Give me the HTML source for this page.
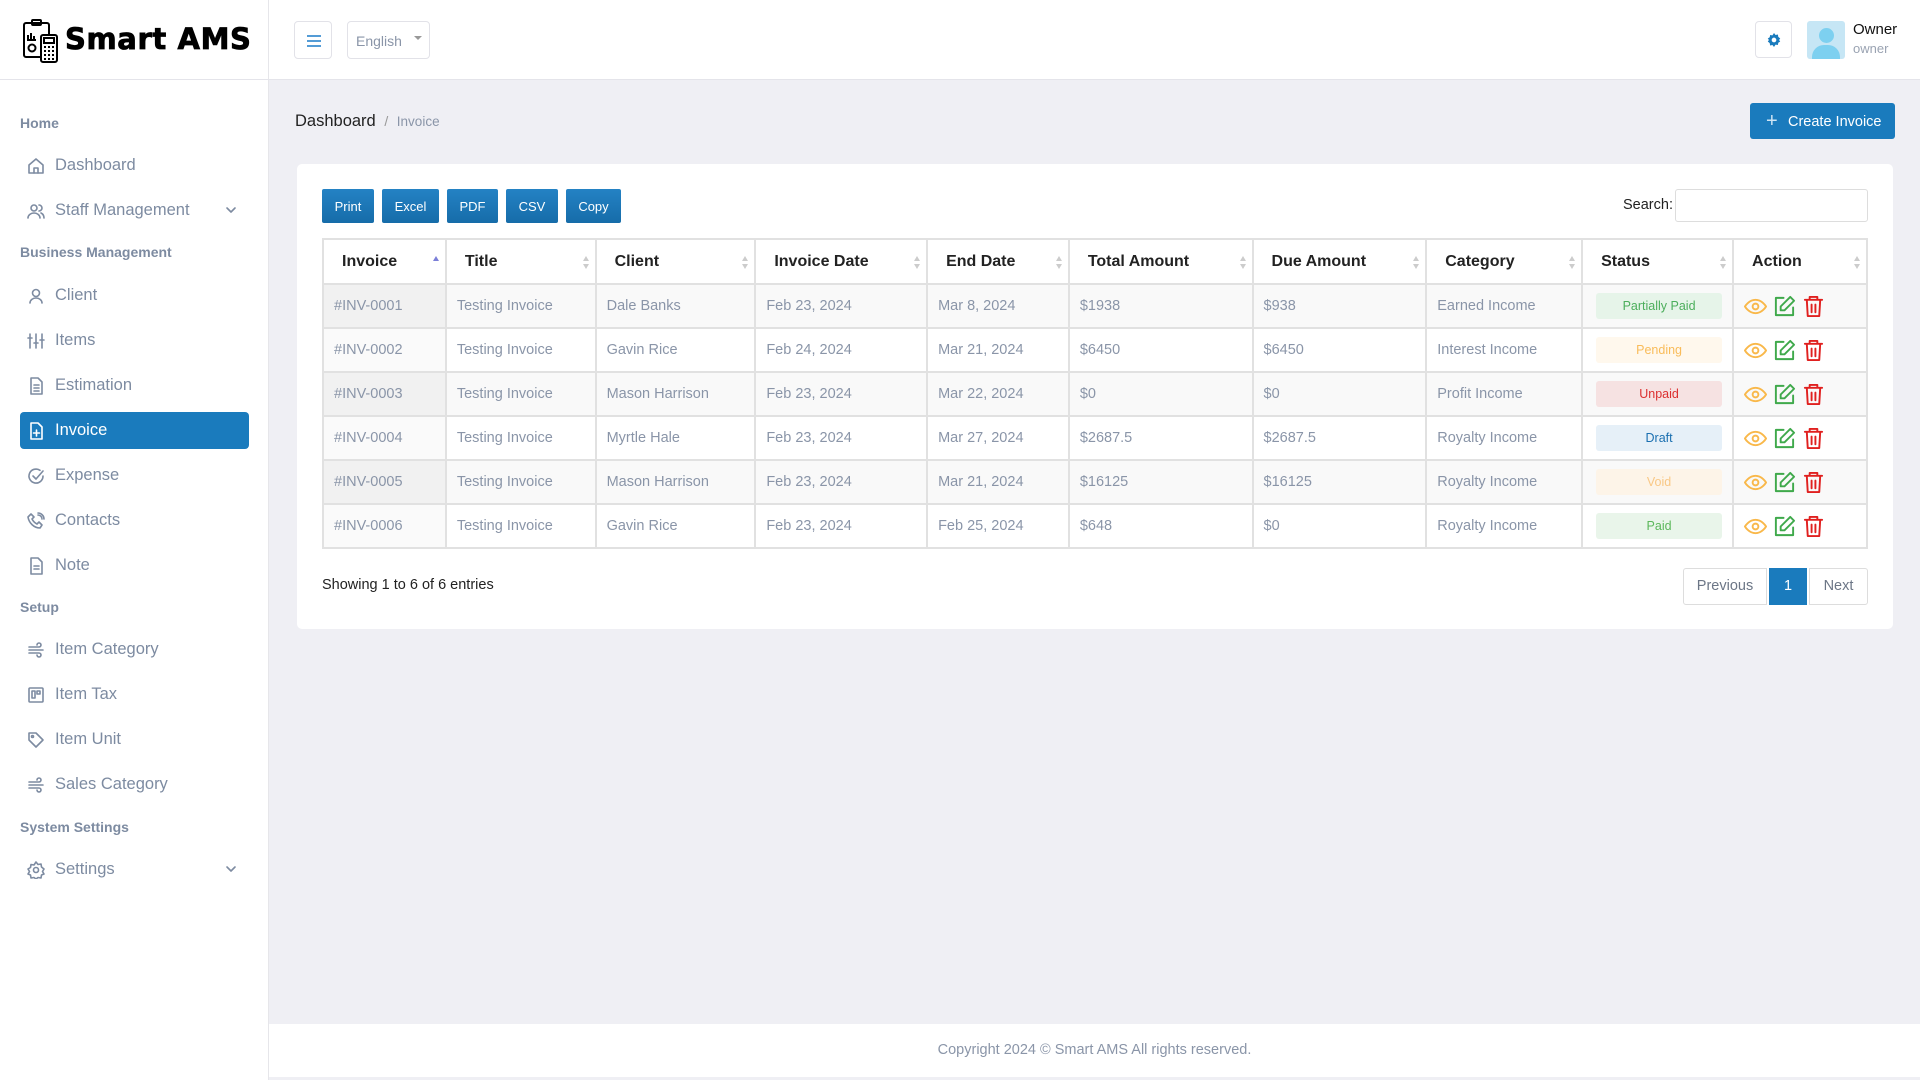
<!DOCTYPE html>
<html><head><meta charset="utf-8"><style>
*{box-sizing:border-box;margin:0;padding:0}
body{width:1920px;height:1080px;position:relative;background:#efeff4;font-family:"Liberation Sans",sans-serif;overflow:hidden}
.a{position:absolute}
#side{left:0;top:0;width:269px;height:1080px;background:#fff;border-right:1px solid #e6e6ea}
#top{left:269px;top:0;width:1651px;height:80px;background:#fff;border-bottom:1px solid #e4e4ea}
.sec{position:absolute;left:20px;font-size:14px;font-weight:bold;color:#7d8ba1;transform:translateY(-50%)}
.it{position:absolute;left:20px;width:229px;height:37px;margin-top:-18px;font-size:16.5px;color:#7d8ba1;display:flex;align-items:center;padding-left:35px;border-radius:4px}
.it svg{position:absolute;left:7px;top:10px;width:18px;height:18px;fill:none;stroke:#7d8ba1;stroke-width:1.6;stroke-linecap:round;stroke-linejoin:round}
.it .chev{left:auto;right:12px;top:12px;width:12px;height:12px}
.it.on{background:#1a7bbd;color:#fff}
.it.on svg{stroke:#fff}
.btn{position:absolute;top:189px;height:34px;background:#1b76b5;color:#fff;font-size:13px;display:flex;align-items:center;justify-content:center;border-radius:2px;background:linear-gradient(#2482c4,#166ca9)}
table{position:absolute;left:322px;top:238px;width:1546px;border-collapse:collapse;font-size:14.5px}
td,th{border:2px solid #e1e1e1;padding:0 0 0 10px;text-align:left;height:44px;color:#8a95a8}
th{color:#222;font-size:16px;font-weight:bold;padding-left:18px;height:45px;position:relative}
th i{position:absolute;right:6px;top:16px;width:6px;height:13px}
th i:before,th i:after{content:"";position:absolute;left:0;border-left:3.5px solid transparent;border-right:3.5px solid transparent}
th i:before{top:0;border-bottom:5px solid #ccc}
th i:after{bottom:0;border-top:5px solid #ccc}
th i.up:after{display:none}th i.up:before{border-bottom-color:#7b7fd8}
tr.o td{background:#f9f9f9}
tr.o td:first-child{background:#f1f1f1}
tr.e td:first-child{background:#fafafa}
.bd{display:block;width:126px;height:26px;border-radius:3px;font-size:12.5px;text-align:center;line-height:26px;margin-left:3px}
.ic{display:flex;gap:6px;align-items:center}
.ic svg{width:23px;height:23px;fill:none;stroke-width:2;stroke-linecap:round;stroke-linejoin:round}
</style></head><body>
<div id="side" class="a">
 <svg class="a" style="left:23px;top:19px" width="36" height="44" viewBox="0 0 36 44" fill="none" stroke="#000" stroke-width="2"><rect x="1" y="4" width="25" height="34" rx="2"/><rect x="9" y="1" width="9" height="5" rx="1"/><path d="M5 16v4M8 14v6M11 17v3M4 21h9"/><circle cx="9" cy="29" r="3.5"/><rect x="18" y="16" width="16" height="27" rx="2" fill="#fff"/><rect x="21" y="19" width="10" height="5"/><path d="M21 28h2M25 28h2M29 28h2M21 32h2M25 32h2M29 32h2M21 36h2M25 36h2M29 36h2M21 40h2M25 40h2M29 40h2"/></svg>
 <div class="a" style="left:65px;top:22px;font-family:'DejaVu Sans',sans-serif;font-size:29px;font-weight:bold;color:#000;letter-spacing:0.6px;-webkit-text-stroke:0.8px #000;white-space:nowrap">Smart AMS</div>
 <div class="a" style="left:0;top:79px;width:269px;border-top:1px solid #e4e4ea"></div>
 <div class="sec" style="top:123px">Home</div>
 <div class="it" style="top:165px"><svg viewBox="0 0 18 18"><path d="M2 8l7-6 7 6v8H2z"/><path d="M7 16v-5h4v5"/></svg>Dashboard</div>
 <div class="it" style="top:210px"><svg viewBox="0 0 18 18"><circle cx="7" cy="6" r="3"/><path d="M1 16c0-3 3-5 6-5s6 2 6 5M12 3a3 3 0 010 6M14 11c2 1 3 3 3 5"/></svg>Staff Management<svg class="chev" viewBox="0 0 12 12"><path d="M2 4l4 4 4-4"/></svg></div>
 <div class="sec" style="top:252px">Business Management</div>
 <div class="it" style="top:295px"><svg viewBox="0 0 18 18"><circle cx="9" cy="6" r="3.5"/><path d="M3 16c0-3 3-5 6-5s6 2 6 5"/></svg>Client</div>
 <div class="it" style="top:340px"><svg viewBox="0 0 18 18"><path d="M3 2v14M9 2v14M15 2v14M1 6h4M7 11h4M13 8h4"/></svg>Items</div>
 <div class="it" style="top:385px"><svg viewBox="0 0 18 18"><path d="M4 1h7l4 4v12H4z"/><path d="M7 8h5M7 11h5M7 14h5"/></svg>Estimation</div>
 <div class="it on" style="top:430px"><svg viewBox="0 0 18 18"><path d="M4 1h7l4 4v12H4z"/><path d="M9.5 8v6M6.5 11h6"/></svg>Invoice</div>
 <div class="it" style="top:475px"><svg viewBox="0 0 18 18"><path d="M16 9a7 7 0 11-3-5.7"/><path d="M6 9l3 3 7-8"/></svg>Expense</div>
 <div class="it" style="top:520px"><svg viewBox="0 0 18 18"><path d="M4 2l3 3-2 2c1 2 3 4 5 5l2-2 3 3-2 3C7 16 2 11 1 5z"/><path d="M11 3a4 4 0 014 4M11 1a6 6 0 016 6"/></svg>Contacts</div>
 <div class="it" style="top:565px"><svg viewBox="0 0 18 18"><path d="M4 1h7l4 4v12H4z"/><path d="M7 9h5M7 12h5"/></svg>Note</div>
 <div class="sec" style="top:607px">Setup</div>
 <div class="it" style="top:649px"><svg viewBox="0 0 18 18"><path d="M2 6h10a2 2 0 10-2-2M2 9h14M2 12h10a2 2 0 11-2 2"/></svg>Item Category</div>
 <div class="it" style="top:694px"><svg viewBox="0 0 18 18"><rect x="2" y="2" width="14" height="14" rx="1"/><path d="M5 5h3v7H5zM10 5h3v3h-3z"/></svg>Item Tax</div>
 <div class="it" style="top:739px"><svg viewBox="0 0 18 18"><path d="M2 2h7l7 7-7 7-7-7z"/><circle cx="5.5" cy="5.5" r="1"/></svg>Item Unit</div>
 <div class="it" style="top:784px"><svg viewBox="0 0 18 18"><path d="M2 6h10a2 2 0 10-2-2M2 9h14M2 12h10a2 2 0 11-2 2"/></svg>Sales Category</div>
 <div class="sec" style="top:827px">System Settings</div>
 <div class="it" style="top:869px"><svg viewBox="0 0 18 18"><circle cx="9" cy="9" r="2.5"/><path d="M9 1l2 2.5 3-.5.5 3L17 8l-1.5 2.5L17 13l-2.5 1-.5 3-3-.5L9 18l-2-1.5-3 .5-.5-3L1 13l1.5-2.5L1 8l2.5-1.5.5-3 3 .5z"/></svg>Settings<svg class="chev" viewBox="0 0 12 12"><path d="M2 4l4 4 4-4"/></svg></div>
</div>
<div id="top" class="a">
 <div class="a" style="left:25px;top:21px;width:38px;height:38px;border:1px solid #e2e2e8;border-radius:4px"><svg class="a" style="left:12px;top:13px" width="14" height="12" viewBox="0 0 14 12" stroke="#3d8fd0" stroke-width="1.8"><path d="M0 1h14M0 6h14M0 11h14"/></svg></div>
 <div class="a" style="left:78px;top:21px;width:83px;height:38px;border:1px solid #e2e2e8;border-radius:4px;font-size:14px;color:#8a95a8;padding:11px 0 0 8px">English<span class="a" style="left:66px;top:14px;border-left:4px solid transparent;border-right:4px solid transparent;border-top:4px solid #999"></span></div>
 <div class="a" style="left:1486px;top:21px;width:37px;height:37px;border:1px solid #e2e2e8;border-radius:4px"><svg class="a" style="left:11px;top:11px" width="14" height="14" viewBox="0 0 18 18" fill="#1a7bbd"><path d="M9 0l2 2.5 3-.5.5 3L17 7l-1.5 2L17 11l-2.5 1.5-.5 3-3-.5L9 18l-2-2.5-3 .5-.5-3L1 11l1.5-2L1 7l2.5-1.5.5-3 3 .5z"/><circle cx="9" cy="9" r="3" fill="#fff"/></svg></div>
 <div class="a" style="left:1538px;top:21px;width:38px;height:38px;background:#c6e6f5;border-radius:3px;overflow:hidden"><div class="a" style="left:12px;top:7px;width:15px;height:15px;border-radius:50%;background:#7dd0f0"></div><div class="a" style="left:5px;top:24px;width:28px;height:20px;border-radius:12px 12px 0 0;background:#7dd0f0"></div></div>
 <div class="a" style="left:1584px;top:21px;font-size:15px;color:#111">Owner</div>
 <div class="a" style="left:1584px;top:41px;font-size:13px;color:#9aa3b2">owner</div>
</div>
<div class="a" style="left:295px;top:112px;font-size:16.5px;color:#222">Dashboard <span style="color:#999;padding:0 4px;font-size:14px">/</span> <span style="font-size:13.5px;color:#8a95a8">Invoice</span></div>
<div class="a" style="left:1750px;top:103px;width:145px;height:36px;background:#1a7bbd;border-radius:3px;color:#fff;font-size:14.5px;padding:11px 0 0 38px"><span class="a" style="left:16px;top:9px;font-size:20px;font-weight:300;color:#cfe5f4;line-height:18px">+</span>Create Invoice</div>
<div class="a" style="left:297px;top:164px;width:1596px;height:465px;background:#fff;border-radius:5px"></div>
<div class="btn" style="left:322px;width:52px">Print</div>
<div class="btn" style="left:382px;width:57px">Excel</div>
<div class="btn" style="left:447px;width:51px">PDF</div>
<div class="btn" style="left:506px;width:52px">CSV</div>
<div class="btn" style="left:566px;width:55px">Copy</div>
<div class="a" style="left:1623px;top:197px;font-size:14.5px;color:#222">Search:</div>
<div class="a" style="left:1675px;top:189px;width:193px;height:33px;border:1px solid #ddd;border-radius:3px"></div>
<table>
<colgroup><col style="width:123px"><col style="width:150px"><col style="width:160px"><col style="width:172px"><col style="width:142px"><col style="width:184px"><col style="width:174px"><col style="width:156px"><col style="width:151px"><col style="width:134px"></colgroup>
<tr><th>Invoice<i class="up"></i></th><th>Title<i></i></th><th>Client<i></i></th><th>Invoice Date<i></i></th><th>End Date<i></i></th><th>Total Amount<i></i></th><th>Due Amount<i></i></th><th>Category<i></i></th><th>Status<i></i></th><th>Action<i></i></th></tr>
<tr class="o"><td>#INV-0001</td><td>Testing Invoice</td><td>Dale Banks</td><td>Feb 23, 2024</td><td>Mar 8, 2024</td><td>$1938</td><td>$938</td><td>Earned Income</td><td><span class="bd" style="background:#e6f4e9;color:#4cae5c">Partially Paid</span></td><td>ACT</td></tr>
<tr class="e"><td>#INV-0002</td><td>Testing Invoice</td><td>Gavin Rice</td><td>Feb 24, 2024</td><td>Mar 21, 2024</td><td>$6450</td><td>$6450</td><td>Interest Income</td><td><span class="bd" style="background:#fff8ed;color:#f9bc5a">Pending</span></td><td>ACT</td></tr>
<tr class="o"><td>#INV-0003</td><td>Testing Invoice</td><td>Mason Harrison</td><td>Feb 23, 2024</td><td>Mar 22, 2024</td><td>$0</td><td>$0</td><td>Profit Income</td><td><span class="bd" style="background:#f6e2e2;color:#dc2f2f">Unpaid</span></td><td>ACT</td></tr>
<tr class="e"><td>#INV-0004</td><td>Testing Invoice</td><td>Myrtle Hale</td><td>Feb 23, 2024</td><td>Mar 27, 2024</td><td>$2687.5</td><td>$2687.5</td><td>Royalty Income</td><td><span class="bd" style="background:#e6f0f8;color:#1a6fb0">Draft</span></td><td>ACT</td></tr>
<tr class="o"><td>#INV-0005</td><td>Testing Invoice</td><td>Mason Harrison</td><td>Feb 23, 2024</td><td>Mar 21, 2024</td><td>$16125</td><td>$16125</td><td>Royalty Income</td><td><span class="bd" style="background:#fdf4e8;color:#f9c886">Void</span></td><td>ACT</td></tr>
<tr class="e"><td>#INV-0006</td><td>Testing Invoice</td><td>Gavin Rice</td><td>Feb 23, 2024</td><td>Feb 25, 2024</td><td>$648</td><td>$0</td><td>Royalty Income</td><td><span class="bd" style="background:#e9f5ea;color:#5cb85c">Paid</span></td><td>ACT</td></tr>
</table>
<div class="a" style="left:322px;top:577px;font-size:14.5px;color:#222">Showing 1 to 6 of 6 entries</div>
<div class="a" style="left:1683px;top:568px;width:84px;height:37px;border:1px solid #ddd;border-radius:3px 0 0 3px;font-size:14.5px;color:#6c7686;text-align:center;line-height:35px">Previous</div>
<div class="a" style="left:1769px;top:568px;width:38px;height:37px;background:#1a7bbd;font-size:14.5px;color:#fff;text-align:center;line-height:37px">1</div>
<div class="a" style="left:1809px;top:568px;width:59px;height:37px;border:1px solid #ddd;border-radius:0 3px 3px 0;font-size:14.5px;color:#6c7686;text-align:center;line-height:35px">Next</div>
<div class="a" style="left:269px;top:1024px;width:1651px;height:53px;background:#fff;font-size:14.5px;color:#8a95a8;text-align:center;line-height:53px">Copyright 2024 © Smart AMS All rights reserved.</div>
<script>
var ic='<div class="ic"><svg viewBox="0 0 24 24" stroke="#f9b84a"><path d="M1 12s4-7 11-7 11 7 11 7-4 7-11 7S1 12 1 12z"/><circle cx="12" cy="12" r="3"/></svg><svg viewBox="0 0 24 24" stroke="#3fa94b"><path d="M11 3H3v18h18v-8"/><path d="M18 2l4 4-10 10H8v-4z"/></svg><svg viewBox="0 0 24 24" stroke="#e0201f" stroke-width="2.4"><path d="M3 5h18M8 5V2h8v3M5 5l1 17h12l1-17M10 10v8M14 10v8"/></svg></div>';
document.querySelectorAll('td').forEach(function(t){if(t.textContent=='ACT')t.innerHTML=ic;});
</script>
</body></html>
